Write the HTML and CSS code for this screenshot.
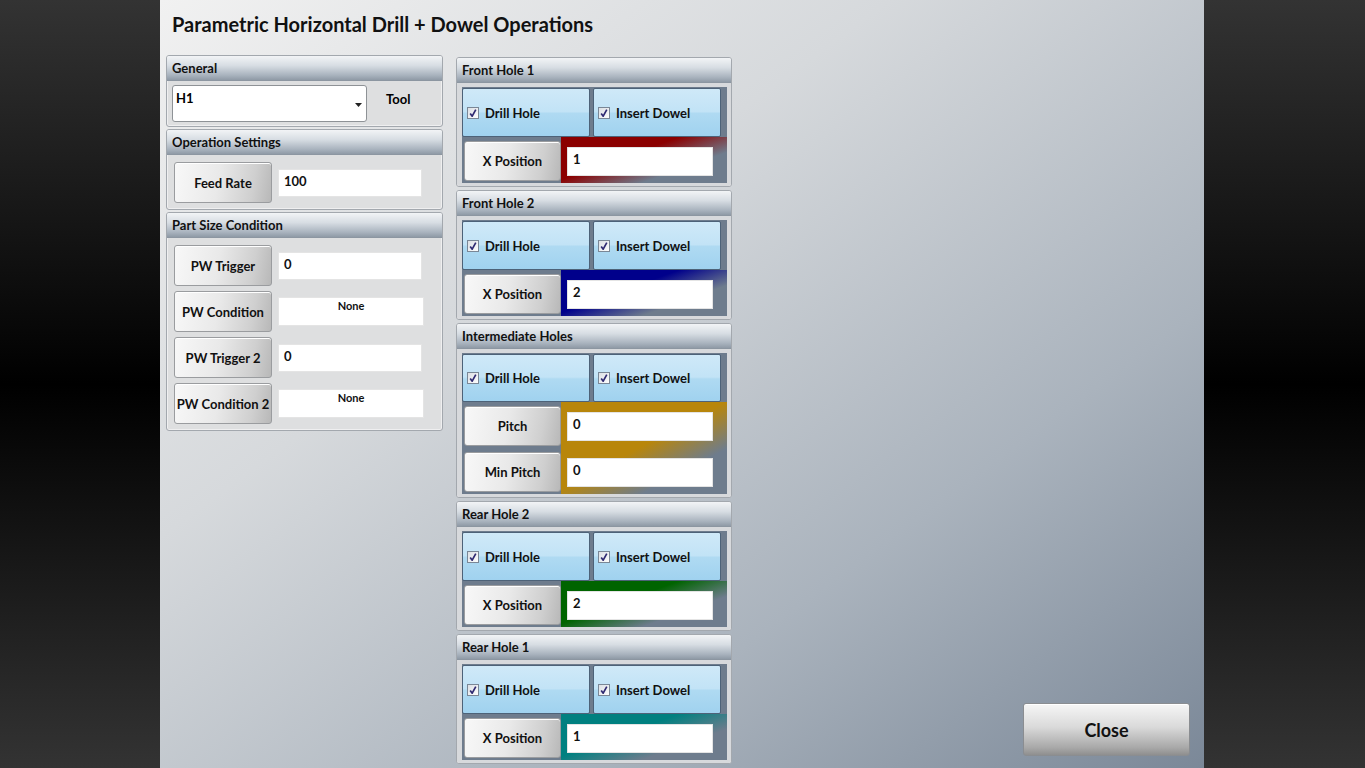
FILE: index.html
```html
<!DOCTYPE html>
<html lang="en">
<head>
  <meta charset="UTF-8" />
  <title>Parametric Horizontal Drill + Dowel Operations</title>
  <meta name="viewport" content="width=device-width, initial-scale=1" />
  <link rel="stylesheet" href="styles.css">
</head>
<body>
  <div class="dialog">
    <h1 class="title">Parametric Horizontal Drill + Dowel Operations</h1>
    <div class="content">
      <div class="col col-left">
        <section class="panel">
          <div class="panel-head">General</div>
          <div class="panel-body general">
            <div class="combo">
              <span>H1</span>
              <svg class="combo-arrow" width="7" height="4" viewBox="0 0 7 4"><path d="M0 0 H7 L3.5 4 Z" fill="#222"/></svg>
            </div>
            <span class="combo-label">Tool</span>
          </div>
        </section>
        <section class="panel">
          <div class="panel-head">Operation Settings</div>
          <div class="panel-body rows">
            <div class="row">
              <button class="gray-btn">Feed Rate</button>
              <div class="field">100</div>
            </div>
          </div>
        </section>
        <section class="panel">
          <div class="panel-head">Part Size Condition</div>
          <div class="panel-body rows">
            <div class="row">
              <button class="gray-btn">PW Trigger</button>
              <div class="field">0</div>
            </div>
            <div class="row">
              <button class="gray-btn">PW Condition</button>
              <div class="field field-select">None</div>
            </div>
            <div class="row">
              <button class="gray-btn">PW Trigger 2</button>
              <div class="field">0</div>
            </div>
            <div class="row">
              <button class="gray-btn">PW Condition 2</button>
              <div class="field field-select">None</div>
            </div>
          </div>
        </section>
      </div>

      <div class="col col-right">
        <section class="panel hole red">
          <div class="panel-head">Front Hole 1</div>
          <div class="panel-body">
            <div class="hole-inner">
              <div class="checks">
                <button class="check-btn"><svg class="cb" width="12" height="12" viewBox="0 0 12 12"><use href="#cb"/></svg>Drill Hole</button>
                <button class="check-btn"><svg class="cb" width="12" height="12" viewBox="0 0 12 12"><use href="#cb"/></svg>Insert Dowel</button>
              </div>
              <div class="fields">
                <div class="labels"><button class="gray-btn">X Position</button></div>
                <div class="accent"><div class="slot"><div class="field">1</div></div></div>
              </div>
            </div>
          </div>
        </section>
        <section class="panel hole blue">
          <div class="panel-head">Front Hole 2</div>
          <div class="panel-body">
            <div class="hole-inner">
              <div class="checks">
                <button class="check-btn"><svg class="cb" width="12" height="12" viewBox="0 0 12 12"><use href="#cb"/></svg>Drill Hole</button>
                <button class="check-btn"><svg class="cb" width="12" height="12" viewBox="0 0 12 12"><use href="#cb"/></svg>Insert Dowel</button>
              </div>
              <div class="fields">
                <div class="labels"><button class="gray-btn">X Position</button></div>
                <div class="accent"><div class="slot"><div class="field">2</div></div></div>
              </div>
            </div>
          </div>
        </section>
        <section class="panel hole gold">
          <div class="panel-head">Intermediate Holes</div>
          <div class="panel-body">
            <div class="hole-inner">
              <div class="checks">
                <button class="check-btn short"><svg class="cb" width="12" height="12" viewBox="0 0 12 12"><use href="#cb"/></svg>Drill Hole</button>
                <button class="check-btn short"><svg class="cb" width="12" height="12" viewBox="0 0 12 12"><use href="#cb"/></svg>Insert Dowel</button>
              </div>
              <div class="fields">
                <div class="labels">
                  <button class="gray-btn">Pitch</button>
                  <button class="gray-btn">Min Pitch</button>
                </div>
                <div class="accent">
                  <div class="slot"><div class="field">0</div></div>
                  <div class="slot"><div class="field">0</div></div>
                </div>
              </div>
            </div>
          </div>
        </section>
        <section class="panel hole green">
          <div class="panel-head">Rear Hole 2</div>
          <div class="panel-body">
            <div class="hole-inner">
              <div class="checks">
                <button class="check-btn"><svg class="cb" width="12" height="12" viewBox="0 0 12 12"><use href="#cb"/></svg>Drill Hole</button>
                <button class="check-btn"><svg class="cb" width="12" height="12" viewBox="0 0 12 12"><use href="#cb"/></svg>Insert Dowel</button>
              </div>
              <div class="fields">
                <div class="labels"><button class="gray-btn">X Position</button></div>
                <div class="accent"><div class="slot"><div class="field">2</div></div></div>
              </div>
            </div>
          </div>
        </section>
        <section class="panel hole teal">
          <div class="panel-head">Rear Hole 1</div>
          <div class="panel-body">
            <div class="hole-inner">
              <div class="checks">
                <button class="check-btn"><svg class="cb" width="12" height="12" viewBox="0 0 12 12"><use href="#cb"/></svg>Drill Hole</button>
                <button class="check-btn"><svg class="cb" width="12" height="12" viewBox="0 0 12 12"><use href="#cb"/></svg>Insert Dowel</button>
              </div>
              <div class="fields">
                <div class="labels"><button class="gray-btn">X Position</button></div>
                <div class="accent"><div class="slot"><div class="field">1</div></div></div>
              </div>
            </div>
          </div>
        </section>
      </div>

      <div class="actions">
        <button class="close-btn">Close</button>
      </div>
    </div>
  </div>

  <svg width="0" height="0" class="defs">
    <defs>
      <linearGradient id="cbfill" x1="0" y1="0" x2="1" y2="1">
        <stop offset="0" stop-color="#d9dde2"/>
        <stop offset="1" stop-color="#ffffff"/>
      </linearGradient>
      <symbol id="cb" viewBox="0 0 12 12">
        <rect x="0.5" y="0.5" width="11" height="11" fill="url(#cbfill)" stroke="#7a8796"/>
        <path d="M3.2 6.4 L5.2 9.2 L8.8 2.6" fill="none" stroke="#2f2a72" stroke-width="1.7" stroke-linejoin="round"/>
      </symbol>
    </defs>
  </svg>
</body>
</html>
```

FILE: styles.css
```css
html, body {
  margin: 0;
  height: 100%;
}
body {
  font-family: Lato, "Open Sans", sans-serif;
  background: linear-gradient(to bottom, #333333 0%, #000000 50%, #333333 100%);
  overflow: hidden;
}
.defs {
  position: absolute;
}
.dialog {
  width: 1044px;
  height: 768px;
  margin-left: 160px;
  background: linear-gradient(to bottom right, #f1f1f1 0%, #d6d9dc 35%, #aab3bd 70%, #7b8898 100%);
  display: flex;
  flex-direction: column;
}
.title {
  margin: 0;
  padding: 10px 12px 17px;
  font-size: 20px;
  line-height: 28px;
  font-weight: 700;
  color: #111;
}
.content {
  flex: 1;
  display: flex;
  padding-left: 6px;
}
.col {
  display: flex;
  flex-direction: column;
  gap: 2px;
}
.col-left {
  width: 277px;
}
.col-right {
  width: 276px;
  margin-left: 13px;
  margin-top: 2px;
  gap: 3px;
}
.actions {
  flex: 1;
  display: flex;
  justify-content: flex-end;
  align-items: flex-end;
  padding: 0 14px 12px 0;
}

/* panels */
.panel {
  border: 1px solid #a3a8ae;
  border-radius: 3px;
  background: #dedfe0;
  box-shadow: inset 0 0 0 1px rgba(255, 255, 255, 0.5);
  overflow: hidden;
}
.panel-head {
  height: 24px;
  line-height: 24px;
  padding-left: 5px;
  font-size: 13px;
  font-weight: 700;
  color: #111;
  background: linear-gradient(to bottom, #f2f4f6 0%, #d7dde3 40%, #a9b3be 80%, #8f9aa6 100%);
  border-bottom: 1px solid #8c96a1;
}
.panel-body {
  padding: 5px;
}
.general {
  display: flex;
  align-items: center;
  padding: 4px 5px;
}
.combo {
  width: 195px;
  height: 37px;
  box-sizing: border-box;
  background: #fff;
  border: 1px solid #8e9296;
  border-radius: 3px;
  position: relative;
  font-size: 13px;
  font-weight: 700;
  padding: 4px 0 0 3px;
}
.combo-arrow {
  position: absolute;
  left: 182px;
  top: 17px;
}
.combo-label {
  margin-left: 19px;
  margin-top: -9px;
  font-size: 13px;
  font-weight: 700;
}
.rows {
  display: flex;
  flex-direction: column;
  gap: 5px;
  padding: 7px 6px 6px 7px;
}
.row {
  display: flex;
  align-items: center;
  gap: 6px;
}
.gray-btn {
  width: 98px;
  height: 41px;
  padding: 0;
  font-family: inherit;
  font-size: 13px;
  font-weight: 700;
  color: #111;
  border: 1px solid #9a9c9f;
  border-radius: 3px;
  background: linear-gradient(100deg, #f8f8f8 0%, #e9e9e9 45%, #cfcfcf 80%, #b8b8b8 100%);
  box-shadow: inset 0 1px 0 #ffffff;
}
.field {
  width: 144px;
  height: 28px;
  box-sizing: border-box;
  background: #fff;
  border: 1px solid #e4e4e4;
  padding: 3px 5px;
  font-size: 13px;
  font-weight: 700;
  color: #111;
}
.field-select {
  width: 146px;
  height: 29px;
  text-align: center;
  padding-top: 1px;
  font-size: 11px;
}

/* hole panels */
.hole .panel-body {
  padding: 4px 4px 3px 5px;
  background: #d7d9dc;
}
.hole-inner {
  background: linear-gradient(to bottom right, var(--accent) 0%, var(--accent) 67%, #6e7c8d 84%);
}
.red { --accent: #8b0000; }
.blue { --accent: #00008b; }
.gold { --accent: #b8860b; }
.green { --accent: #006400; }
.teal { --accent: #008080; }
.checks {
  display: flex;
  gap: 3px;
  padding: 1px 6px 0 0;
  background: #6e7c8d;
}
.check-btn {
  flex: 1;
  height: 49px;
  display: flex;
  align-items: center;
  gap: 6px;
  padding: 0 0 0 4px;
  font-family: inherit;
  font-size: 13px;
  font-weight: 700;
  color: #111;
  border: 1px solid #4d6278;
  border-radius: 2px;
  background: linear-gradient(to bottom, #cfe9f8 0%, #c2e3f6 48%, #afdaf2 52%, #a0d2ef 100%);
}
.check-btn.short {
  height: 48px;
}
.cb {
  flex: none;
}
.fields {
  display: flex;
}
.labels {
  width: 99px;
  display: flex;
  flex-direction: column;
  gap: 5px;
  padding: 4px 0 2px 2px;
  box-sizing: border-box;
  background: #6e7c8d;
}
.labels .gray-btn {
  width: 97px;
  height: 40px;
}
.gold .labels {
  gap: 6px;
  padding-bottom: 2px;
}
.accent {
  flex: 1;
  display: flex;
  flex-direction: column;
  gap: 5px;
  padding: 4px 0 2px 6px;
}
.gold .accent {
  gap: 6px;
  padding-bottom: 2px;
}
.slot {
  height: 40px;
  display: flex;
  align-items: center;
}
.slot .field {
  width: 146px;
  height: 29px;
}

.close-btn {
  width: 167px;
  height: 53px;
  font-family: inherit;
  font-size: 18px;
  font-weight: 700;
  color: #111;
  border: 1px solid #8a8d91;
  border-radius: 3px;
  background: linear-gradient(to bottom, #f6f6f6 0%, #dadada 45%, #a9a9a9 85%, #8f8f8f 100%);
  box-shadow: inset 0 1px 0 #ffffff;
}
```
